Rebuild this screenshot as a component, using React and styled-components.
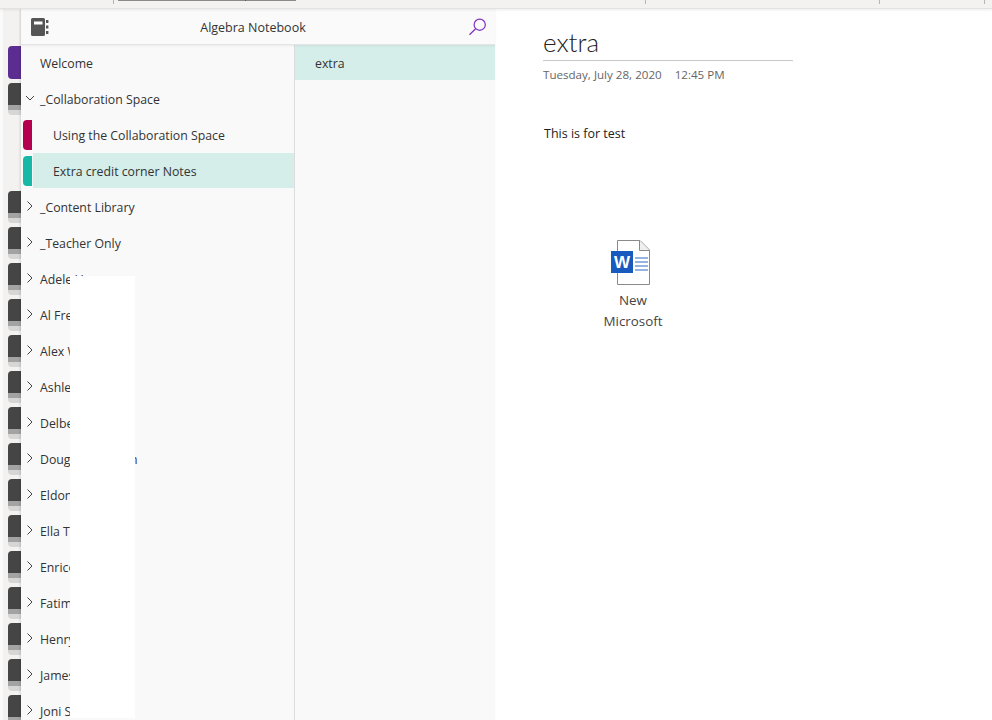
import styled, { createGlobalStyle } from "styled-components";

const GlobalStyle = createGlobalStyle`
  html, body {
    margin: 0;
    padding: 0;
    height: 720px;
    overflow: hidden;
    background: #ffffff;
    font-family: "Open Sans", "Liberation Sans", sans-serif;
  }
`;

const Page = styled.div`
  width: 992px;
  height: 720px;
  position: relative;
  overflow: hidden;
  display: flex;
  flex-direction: column;
`;

const TopBar = styled.div`
  height: 8px;
  flex: none;
  background: #f3f2f1;
  border-bottom: 1px solid #e2e2e2;
  box-shadow: 0 1px 3px rgba(0, 0, 0, 0.08);
  display: flex;
  align-items: flex-start;
  padding-left: 113px;
  z-index: 2;
`;

const Divider = styled.div`
  width: 1px;
  height: 4px;
  background: #b5b5b5;
  margin-left: ${(p) => p.$gap}px;
`;

const ToolBox = styled.div`
  width: 178px;
  height: 1px;
  margin-left: 4px;
  background: linear-gradient(to right, #8a8a8a 127px, #555 127px, #555 128px, #8a8a8a 128px);
`;

const Main = styled.div`
  flex: 1;
  display: flex;
  min-height: 0;
`;

const TabRail = styled.div`
  width: 21px;
  flex: none;
  background: #f3f2f1;
  border-left: 3px solid #fafafa;
  padding: 37px 0 0 5px;
  box-sizing: border-box;
  display: flex;
  flex-direction: column;
  overflow: hidden;
`;

const RailTab = styled.div`
  width: 13px;
  height: 33px;
  margin-bottom: 4px;
  flex: none;
  border-radius: 4px 0 0 4px;
  background: ${(p) => p.$color};
`;

const StackTab = styled.div`
  width: 13px;
  height: 32px;
  margin-bottom: ${(p) => p.$bottom}px;
  flex: none;
  border-radius: 4px 0 0 4px;
  background: linear-gradient(
    to bottom,
    #454545 0,
    #454545 22px,
    #a3a3a3 22px,
    #a3a3a3 27px,
    #d6d6d6 27px,
    #d6d6d6 32px
  );
`;

const Navigator = styled.div`
  width: 474px;
  flex: none;
  display: flex;
  flex-direction: column;
  background: #f9f9f9;
  box-shadow: -1px 0 2px rgba(0, 0, 0, 0.12);
  z-index: 1;
`;

const NotebookHeader = styled.div`
  height: 35px;
  flex: none;
  display: flex;
  align-items: center;
  padding: 0 7px 0 9px;
  background: #fafafa;
  border-bottom: 1px solid #e4e4e4;
  box-shadow: 0 1px 2px rgba(0, 0, 0, 0.06);
  z-index: 1;
`;

const NotebookTitle = styled.div`
  flex: 1;
  text-align: center;
  font-size: 12.5px;
  color: #333333;
  padding: 1px 12px 0 0;
`;

const Columns = styled.div`
  flex: 1;
  display: flex;
  min-height: 0;
`;

const SectionList = styled.div`
  width: 273px;
  flex: none;
  border-right: 1px solid #dcdcdc;
  overflow: hidden;
`;

const SectionRow = styled.div`
  height: 36px;
  display: flex;
  align-items: center;
  font-size: 12.3px;
  color: #333333;
  white-space: nowrap;
  position: relative;
  padding-left: ${(p) => (p.$child ? 32 : 19)}px;
  background: ${(p) => (p.$active ? "#d5eeea" : "transparent")};
  margin-left: ${(p) => (p.$active ? 12 : 0)}px;
  ${(p) =>
    p.$active &&
    "padding-left: 20px; padding-top: 1px; box-sizing: border-box; height: 35px; margin-bottom: 1px;"}
`;

const Chevron = styled.svg`
  position: absolute;
  left: 4px;
  top: 12px;
  width: 10px;
  height: 10px;
  fill: none;
  stroke: #444444;
  stroke-width: 1;
`;

const SectionColor = styled.div`
  position: absolute;
  left: ${(p) => (p.$active ? -10 : 2)}px;
  top: 3px;
  width: 9px;
  height: 30px;
  border-radius: 4px 0 0 4px;
  background: ${(p) => p.$color};
`;

const PageList = styled.div`
  flex: 1;
`;

const PageRow = styled.div`
  height: 35px;
  box-sizing: border-box;
  padding: 1px 0 0 20px;
  display: flex;
  align-items: center;
  font-size: 12.3px;
  color: #333333;
  background: #d5eeea;
`;

const Canvas = styled.div`
  flex: 1;
  padding: 17px 0 0 48px;
  background: #ffffff;
  min-width: 0;
`;

const PageTitle = styled.div`
  width: 250px;
  font-family: "Lato", "Open Sans", sans-serif;
  font-size: 26px;
  font-weight: 300;
  line-height: 33px;
  color: #222222;
  border-bottom: 1px solid #c8c8c8;
  padding-bottom: 1px;
`;

const PageMeta = styled.div`
  display: flex;
  gap: 13px;
  font-size: 11.6px;
  color: #666666;
  margin-top: 6px;
`;

const BodyText = styled.div`
  margin: 43px 0 0 1px;
  font-size: 12.5px;
  color: #222222;
`;

const Attachment = styled.div`
  width: 70px;
  margin: 98px 0 0 55px;
  display: flex;
  flex-direction: column;
  align-items: center;
  font-size: 13.4px;
  line-height: 21px;
  color: #444444;
  text-align: center;
`;

const WordIcon = styled.svg`
  width: 40px;
  height: 46px;
  margin: 0 4px 4px 0;
`;

const Mask = styled.div`
  position: absolute;
  left: 70px;
  top: 276px;
  width: 65px;
  height: 442px;
  background: #ffffff;
  z-index: 2;
`;

const people = [
  "Adele Vance",
  "Al Frederick",
  "Alex Wilber",
  "Ashley Grant",
  "Delbert Lane",
  "Douglas Hamson",
  "Eldon Price",
  "Ella Tate",
  "Enrico Bello",
  "Fatima Khan",
  "Henry Moore",
  "James Pike",
  "Joni Sherman",
];

// the notebook rail repeats one grey tab for every section group below the first
const railTabs = ["_Content", "_Teacher", ...people];

function NotebookIcon() {
  return (
    <svg width="20" height="20" viewBox="0 0 20 20">
      <path d="M2.5 1h11a1.5 1.5 0 0 1 1.5 1.5v15a1.5 1.5 0 0 1-1.5 1.5h-11A1.5 1.5 0 0 1 1 17.5v-15A1.5 1.5 0 0 1 2.5 1z" fill="#555555" />
      <rect x="4" y="4.5" width="8.5" height="3" fill="#ffffff" />
      <path d="M16 3h2.4v3H16zM16 8.5h2.4v3H16zM16 14h2.4v3H16z" fill="#555555" />
    </svg>
  );
}

function SearchIcon() {
  return (
    <svg width="20" height="20" viewBox="0 0 20 20" fill="none" stroke="#7e2fbf" strokeWidth="1.2">
      <circle cx="11.7" cy="7.7" r="5.6" />
      <path d="M7.6 11.7L1.5 17.7" />
    </svg>
  );
}

function ChevronIcon({ open }) {
  return (
    <Chevron viewBox="0 0 10 10">
      <path d={open ? "M1 3l4 4 4-4" : "M2.5 0.5L7 5 2.5 9.5"} />
    </Chevron>
  );
}

export default function App() {
  return (
    <Page>
      <GlobalStyle />
      <TopBar>
        <Divider $gap={0} />
        <ToolBox />
        <Divider $gap={349} />
        <Divider $gap={233} />
        <Divider $gap={104} />
      </TopBar>
      <Main>
        <TabRail>
          <RailTab $color="#5c2d91" />
          <StackTab $bottom={76} />
          {railTabs.map((name) => (
            <StackTab key={name} $bottom={4} />
          ))}
        </TabRail>
        <Navigator>
          <NotebookHeader>
            <NotebookIcon />
            <NotebookTitle>Algebra Notebook</NotebookTitle>
            <SearchIcon />
          </NotebookHeader>
          <Columns>
            <SectionList>
              <SectionRow>Welcome</SectionRow>
              <SectionRow>
                <ChevronIcon open />
                _Collaboration Space
              </SectionRow>
              <SectionRow $child>
                <SectionColor $color="#b4004e" />
                Using the Collaboration Space
              </SectionRow>
              <SectionRow $active>
                <SectionColor $active $color="#17b8a6" />
                Extra credit corner Notes
              </SectionRow>
              <SectionRow>
                <ChevronIcon />
                _Content Library
              </SectionRow>
              <SectionRow>
                <ChevronIcon />
                _Teacher Only
              </SectionRow>
              {people.map((name) => (
                <SectionRow key={name}>
                  <ChevronIcon />
                  {name}
                </SectionRow>
              ))}
            </SectionList>
            <PageList>
              <PageRow>extra</PageRow>
            </PageList>
          </Columns>
        </Navigator>
        <Canvas>
          <PageTitle>extra</PageTitle>
          <PageMeta>
            <span>Tuesday, July 28, 2020</span>
            <span>12:45 PM</span>
          </PageMeta>
          <BodyText>This is for test</BodyText>
          <Attachment>
            <WordIcon viewBox="0 0 40 46">
              <path d="M6.5 0.5H29L38.5 10V44.5H6.5z" fill="#ffffff" stroke="#8a8a8a" />
              <path d="M28.5 0.5V10.5H38.5" fill="#f0f0f0" stroke="#8a8a8a" />
              <rect x="0" y="11" width="22" height="22" fill="#185abd" />
              <text x="11" y="28" textAnchor="middle" fontSize="17" fontWeight="700" fill="#ffffff" fontFamily="Liberation Sans, sans-serif">W</text>
              <path d="M24 18h13M24 22h13M24 26h13M24 30h13" stroke="#2b6cc4" strokeWidth="1" />
            </WordIcon>
            <span>New</span>
            <span>Microsoft</span>
          </Attachment>
        </Canvas>
      </Main>
      <Mask />
    </Page>
  );
}
